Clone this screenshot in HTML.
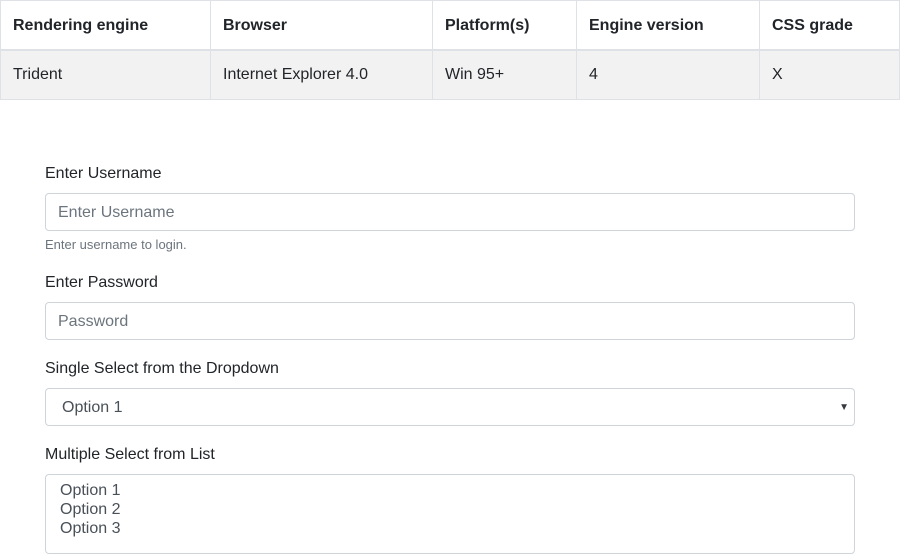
<!DOCTYPE html>
<html><head><style>
*{box-sizing:border-box}
body{margin:0;width:900px;height:535px;overflow:hidden;background:#fff;font-family:"Liberation Sans",sans-serif;color:#212529;font-size:16px}
table{border-collapse:collapse;width:900px;position:absolute;left:0;top:0}
td,th{border:1px solid #dee2e6;padding:0 12px;text-align:left;vertical-align:middle}
th{height:49px;padding-top:3px;font-weight:bold;border-bottom:2px solid #dee2e6}
td{height:50px;padding-top:1px;background:#f2f2f2}
.abs{position:absolute}
.lbl{left:45px;font-size:16px}
.inp{left:45px;width:810px;height:38px;border:1px solid #ced4da;border-radius:4px;padding-left:12px;line-height:38px;color:#6c757d}
</style></head><body>
<table>
<tr><th style="width:210px">Rendering engine</th><th style="width:222px">Browser</th><th style="width:144px">Platform(s)</th><th style="width:183px">Engine version</th><th>CSS grade</th></tr>
<tr><td>Trident</td><td>Internet Explorer 4.0</td><td>Win 95+</td><td>4</td><td>X</td></tr>
</table>
<div class="abs lbl" style="top:165px">Enter Username</div>
<div class="abs inp" style="top:193px">Enter Username</div>
<div class="abs" style="left:45px;top:237px;font-size:13px;color:#6c757d">Enter username to login.</div>
<div class="abs lbl" style="top:274px">Enter Password</div>
<div class="abs inp" style="top:302px">Password</div>
<div class="abs lbl" style="top:360px">Single Select from the Dropdown</div>
<div class="abs inp" style="top:388px;color:#495057;padding-left:16px">Option 1<span style="position:absolute;right:5px;top:0;font-size:10px;color:#343a40">▼</span></div>
<div class="abs lbl" style="top:446px">Multiple Select from List</div>
<div class="abs" style="left:45px;top:474px;width:810px;height:80px;border:1px solid #ced4da;border-radius:4px;padding:6px 14px;color:#495057;line-height:19px">Option 1<br>Option 2<br>Option 3</div>
</body></html>
